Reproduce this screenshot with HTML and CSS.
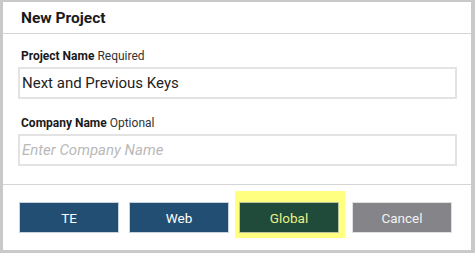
FILE: index.html
```html
<!DOCTYPE html>
<html>
<head>
<meta charset="utf-8">
<link rel="stylesheet" href="styles.css">
</head>
<body>
<div class="dialog">
  <div class="header">New Project</div>
  <div class="content">
    <div class="field">
      <div class="label"><b>Project Name</b> <span class="hint">Required</span></div>
      <div class="input">Next and Previous Keys</div>
    </div>
    <div class="field">
      <div class="label"><b>Company Name</b> <span class="hint">Optional</span></div>
      <div class="input placeholder">Enter Company Name</div>
    </div>
  </div>
  <div class="footer">
    <div class="btn blue">TE</div>
    <div class="btn blue">Web</div>
    <div class="focus"><div class="btn green">Global</div></div>
    <div class="btn gray">Cancel</div>
  </div>
</div>
</body>
</html>
```
FILE: styles.css
```css
html, body {
  margin: 0;
  padding: 0;
}
body {
  width: 475px;
  height: 253px;
  background: #c9c9c9;
  padding: 2px 4px 3px 3px;
  box-sizing: border-box;
  font-family: Roboto, "Open Sans", sans-serif;
  color: #1a1a1a;
}
.dialog {
  background: #fff;
  height: 248px;
  display: flex;
  flex-direction: column;
}
.header {
  height: 32px;
  border-bottom: 1px solid #d4d4d4;
  padding-left: 18px;
  font-weight: bold;
  font-size: 15.5px;
  line-height: 32px;
  box-sizing: border-box;
}
.content {
  padding: 14px 14px 0 15px;
  height: 151px;
  box-sizing: border-box;
  border-bottom: 1px solid #d4d4d4;
}
.field + .field {
  margin-top: 16px;
}
.label {
  font-size: 12px;
  line-height: 17px;
  height: 19px;
  padding-left: 3px;
}
.label b {
  font-weight: bold;
}
.hint {
  font-weight: normal;
  color: #333;
}
.input {
  height: 32px;
  border: 2px solid #e3e3e3;
  box-sizing: border-box;
  padding-left: 2px;
  font-size: 15px;
  line-height: 28px;
  color: #222;
}
.placeholder {
  font-style: italic;
  color: #b9b9b9;
}
.footer {
  display: flex;
  align-items: flex-start;
  padding: 17px 0 0 16px;
  height: 63px;
  box-sizing: border-box;
}
.btn {
  width: 100px;
  height: 31px;
  box-sizing: border-box;
  display: flex;
  align-items: center;
  justify-content: center;
  font-size: 13.5px;
  color: #fff;
  border: 1px solid #c8d2dc;
}
.blue {
  background: #214e72;
  margin-right: 10px;
}
.focus {
  background: #ffff80;
  margin-top: -11px;
  padding: 11px 6px 5px 4px;
  margin-left: -4px;
  margin-right: 7px;
}
.green {
  background: #204a39;
  color: #e9f08a;
  border-color: #b9c79a;
}
.gray {
  background: #858489;
  color: #f2f2f2;
  border-color: #e0e0e0;
}
```
